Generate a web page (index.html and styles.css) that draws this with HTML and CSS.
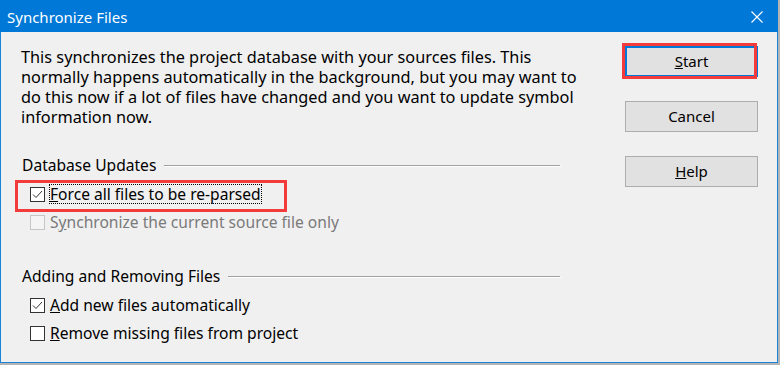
FILE: index.html
```html
<!DOCTYPE html>
<html>
<head>
<meta charset="UTF-8">
<title>Synchronize Files</title>
<link rel="stylesheet" href="styles.css">
</head>
<body>
<div class="window">
    <div class="titlebar">
        <span class="title">Synchronize Files</span>
        <svg class="close" width="12" height="12" viewBox="0 0 12 12">
            <path d="M0.5 0.5 L11.5 11.5 M11.5 0.5 L0.5 11.5" stroke="#fff" stroke-width="1.1" fill="none"/>
        </svg>
    </div>
    <div class="content">
        <div class="main">
            <p class="intro">This synchronizes the project database with your sources files. This<br>normally happens automatically in the background, but you may want to<br>do this now if a lot of files have changed and you want to update symbol<br>information now.</p>

            <div class="group-title"><span>Database Updates</span><i class="rule"></i></div>
            <div class="row marked">
                <span class="box">
                    <svg width="13" height="13" viewBox="0 0 13 13"><path d="M2 6.5 L5 9.5 L11 3" stroke="#333" stroke-width="1" fill="none"/></svg>
                </span>
                <span class="label focus"><u>F</u>orce all files to be re-parsed</span>
            </div>
            <div class="row disabled">
                <span class="box"></span>
                <span class="label">S<u>y</u>nchronize the current source file only</span>
            </div>

            <div class="group-title second"><span>Adding and Removing Files</span><i class="rule"></i></div>
            <div class="row">
                <span class="box">
                    <svg width="13" height="13" viewBox="0 0 13 13"><path d="M2 6.5 L5 9.5 L11 3" stroke="#333" stroke-width="1" fill="none"/></svg>
                </span>
                <span class="label"><u>A</u>dd new files automatically</span>
            </div>
            <div class="row">
                <span class="box"></span>
                <span class="label"><u>R</u>emove missing files from project</span>
            </div>
        </div>

        <div class="actions">
            <div class="btn-wrap marked">
                <button class="btn default"><u>S</u>tart</button>
            </div>
            <button class="btn">Cancel</button>
            <button class="btn"><u>H</u>elp</button>
        </div>
    </div>
</div>
</body>
</html>
```

FILE: styles.css
```css
/* dialog */
body{
    margin: 0;
    background: #b4b4b4;
    font-family: "Noto Sans", "Open Sans", sans-serif;
    font-size: 15px;
    color: #000;
}
.window{
    width: 778px;
    height: 363px;
    box-sizing: border-box;
    border: 1px solid #1883d7;
    background: #f0f0f0;
}
.titlebar{
    display: flex;
    align-items: center;
    justify-content: space-between;
    height: 31px;
    margin: -1px -1px 0;
    padding: 1px 15px 0 7px;
    background: #0078d7;
    color: #fff;
}
.title{
    font-size: 15px;
}
.close{
    display: block;
}

.content{
    display: flex;
    padding-left: 20px;
}
.main{
    width: 539px;
    flex: none;
    font-size: 15.6px;
}
.intro{
    margin: 15px 0 0;
    line-height: 20px;
    white-space: nowrap;
    font-size: 16.3px;
}

.group-title{
    display: flex;
    align-items: center;
    height: 20px;
    line-height: 20px;
    margin-top: 28px;
    padding-left: 1px;
    margin-bottom: 5px;
}
.group-title.second{
    margin-top: 30px;
}
.group-title .rule{
    flex: 1;
    height: 1px;
    margin-left: 8px;
    background: #a0a0a0;
    box-shadow: 1px 1px 0 #fff;
}

.row{
    position: relative;
    display: flex;
    align-items: center;
    height: 28px;
    padding-left: 9px;
    white-space: nowrap;
}
.row .box{
    width: 13px;
    height: 13px;
    border: 1px solid #333;
    background: #fff;
    margin-right: 5px;
}
.row .box svg{
    display: block;
}
.row .label{
    line-height: 20px;
}
.row .label.focus{
    line-height: 18px;
    border: 1px dotted #000;
    margin-left: -1px;
}
.row.disabled .box{
    border-color: #c6c6c6;
    background: #f4f4f4;
}
.row.disabled .label{
    color: #7a7a7a;
}
.row.marked::after{
    content: "";
    position: absolute;
    left: -6px;
    top: 0;
    width: 272px;
    height: 32px;
    box-sizing: border-box;
    border: 3px solid #f33b3b;
}

.actions{
    margin-left: 65px;
    padding-top: 14px;
}
.btn{
    display: block;
    width: 133px;
    height: 31px;
    box-sizing: border-box;
    margin: 0 0 24px;
    padding: 0 0 1px;
    border: 1px solid #adadad;
    background: #e1e1e1;
    font-family: inherit;
    font-size: 15px;
    color: #000;
}
.btn.default{
    border: 2px solid #0078d7;
}
.btn-wrap{
    position: relative;
    margin-bottom: 24px;
}
.btn-wrap .btn{
    margin: 0;
}
.btn-wrap.marked::after{
    content: "";
    position: absolute;
    left: -3px;
    top: -3px;
    width: 135px;
    height: 36px;
    box-sizing: border-box;
    border: 3px solid #f33b3b;
}
```
